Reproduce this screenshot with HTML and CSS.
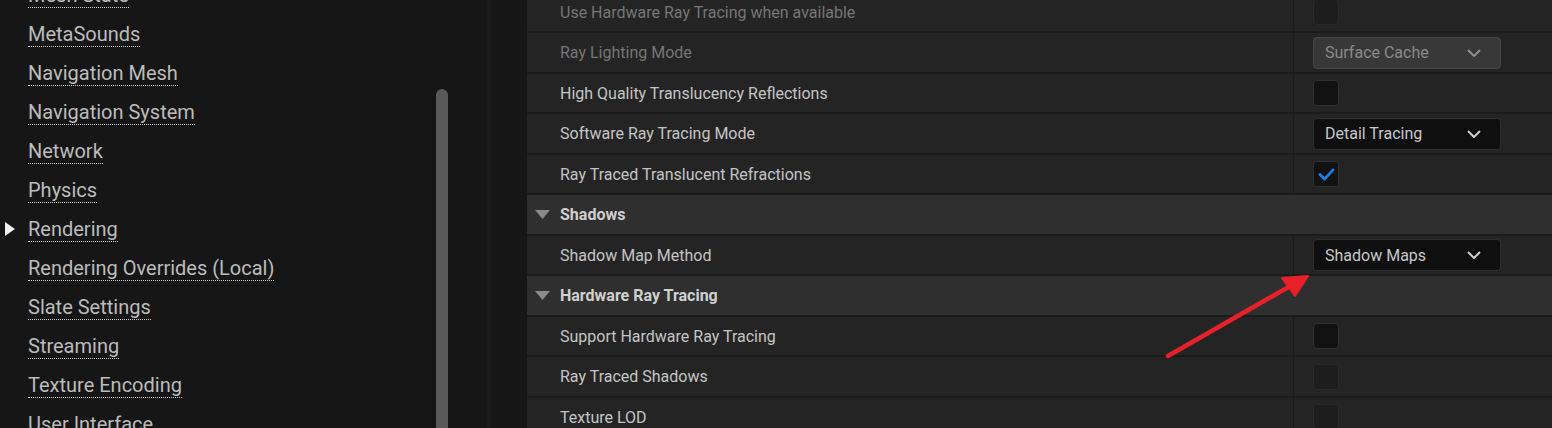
FILE: index.html
```html
<!DOCTYPE html>
<html>
<head>
<meta charset="utf-8">
<link rel="stylesheet" href="styles.css">
</head>
<body>
<div class="app">
  <aside class="sidebar">
    <ul class="nav">
      <li><span class="link">Mesh State</span></li>
      <li><span class="link">MetaSounds</span></li>
      <li><span class="link">Navigation Mesh</span></li>
      <li><span class="link">Navigation System</span></li>
      <li><span class="link">Network</span></li>
      <li><span class="link">Physics</span></li>
      <li class="active"><span class="link">Rendering</span></li>
      <li><span class="link">Rendering Overrides (Local)</span></li>
      <li><span class="link">Slate Settings</span></li>
      <li><span class="link">Streaming</span></li>
      <li><span class="link">Texture Encoding</span></li>
      <li><span class="link">User Interface</span></li>
    </ul>
    <div class="thumb"></div>
  </aside>
  <div class="splitter"></div>
  <div class="gutter"></div>
  <main class="details">
    <div class="row disabled">
      <div class="label">Use Hardware Ray Tracing when available</div>
      <div class="value"><span class="check off"></span></div>
    </div>
    <div class="row disabled">
      <div class="label">Ray Lighting Mode</div>
      <div class="value"><span class="combo off">Surface Cache<svg class="chev" viewBox="0 0 14 8"><path d="M1 1l6 6 6-6"/></svg></span></div>
    </div>
    <div class="row">
      <div class="label">High Quality Translucency Reflections</div>
      <div class="value"><span class="check"></span></div>
    </div>
    <div class="row">
      <div class="label">Software Ray Tracing Mode</div>
      <div class="value"><span class="combo">Detail Tracing<svg class="chev" viewBox="0 0 14 8"><path d="M1 1l6 6 6-6"/></svg></span></div>
    </div>
    <div class="row">
      <div class="label">Ray Traced Translucent Refractions</div>
      <div class="value"><span class="check"><svg class="tick" viewBox="0 0 18 14"><path d="M2 7l5 5 9-10"/></svg></span></div>
    </div>
    <div class="row header">
      <svg class="tri" viewBox="0 0 15 9"><path d="M0 0h15L7.5 9z"/></svg>
      <div class="htext">Shadows</div>
    </div>
    <div class="row">
      <div class="label">Shadow Map Method</div>
      <div class="value"><span class="combo">Shadow Maps<svg class="chev" viewBox="0 0 14 8"><path d="M1 1l6 6 6-6"/></svg></span></div>
    </div>
    <div class="row header">
      <svg class="tri" viewBox="0 0 15 9"><path d="M0 0h15L7.5 9z"/></svg>
      <div class="htext">Hardware Ray Tracing</div>
    </div>
    <div class="row">
      <div class="label">Support Hardware Ray Tracing</div>
      <div class="value"><span class="check"></span></div>
    </div>
    <div class="row">
      <div class="label">Ray Traced Shadows</div>
      <div class="value"><span class="check off"></span></div>
    </div>
    <div class="row">
      <div class="label">Texture LOD</div>
      <div class="value"><span class="check off"></span></div>
    </div>
  </main>
</div>
<svg class="arrow" viewBox="0 0 1552 428" width="1552" height="428">
  <line x1="1168" y1="356" x2="1292" y2="285" stroke="#e8202a" stroke-width="4.5" stroke-linecap="round"/>
  <path d="M1308 276 L1282 278 L1295 296 Z" fill="#e8202a" stroke="#e8202a" stroke-width="2" stroke-linejoin="round"/>
</svg>
</body>
</html>
```

FILE: styles.css
```css
html, body {
  margin: 0;
  padding: 0;
  background: #161616;
  overflow: hidden;
  width: 1552px;
  height: 428px;
  font-family: Roboto, "Liberation Sans", sans-serif;
}

.app {
  display: flex;
  height: 428px;
}

.sidebar {
  position: relative;
  width: 487px;
  flex: none;
  background: #161616;
  overflow: hidden;
}

.nav {
  list-style: none;
  margin: -24px 0 0 0;
  padding: 0 0 0 28px;
}

.nav li {
  position: relative;
  height: 39px;
  display: flex;
  align-items: center;
}

.link {
  font-size: 20px;
  line-height: 22px;
  color: #bcbcbc;
  border-bottom: 1px dotted #d0d0d0;
  padding-bottom: 1px;
}

.active::before {
  content: "";
  position: absolute;
  left: -23px;
  top: 12px;
  border-left: 10px solid #f0f0f0;
  border-top: 7.5px solid transparent;
  border-bottom: 7.5px solid transparent;
}

.thumb {
  position: absolute;
  left: 436px;
  top: 89px;
  width: 12px;
  height: 360px;
  background: #595959;
  border-radius: 6px;
}

.splitter {
  width: 4px;
  flex: none;
  background: #1b1b1b;
}

.gutter {
  width: 36px;
  flex: none;
  background: #161616;
}

.details {
  flex: 1;
  background: #1b1b1b;
  margin-top: -7.2px;
  display: flex;
  flex-direction: column;
  gap: 2px;
}

.row {
  height: 38.5px;
  flex: none;
  display: flex;
  align-items: stretch;
  background: #242424;
}

.label {
  width: 767px;
  flex: none;
  box-sizing: border-box;
  padding-left: 33px;
  display: flex;
  align-items: center;
  font-size: 16px;
  color: #c4c4c4;
  border-right: 1px solid #1b1b1b;
}

.disabled .label {
  color: #767676;
}

.value {
  flex: 1;
  display: flex;
  align-items: center;
  padding-left: 19px;
}

.check {
  width: 26px;
  height: 26px;
  box-sizing: border-box;
  border: 1px solid #303030;
  border-radius: 4px;
  background: #121212;
  display: flex;
  align-items: center;
  justify-content: center;
}

.check.off {
  background: #1d1d1d;
  border-color: #2a2a2a;
}

.tick {
  width: 17px;
  height: 13px;
  fill: none;
  stroke: #1a7fe8;
  stroke-width: 3;
  stroke-linecap: round;
  stroke-linejoin: round;
}

.combo {
  width: 188px;
  height: 32px;
  box-sizing: border-box;
  border: 1px solid #2e2e2e;
  border-radius: 4px;
  background: #0f0f0f;
  color: #c8c8c8;
  font-size: 16px;
  display: flex;
  align-items: center;
  justify-content: space-between;
  padding: 0 19px 0 11px;
}

.combo.off {
  background: #383838;
  border-color: #484848;
  color: #8a8a8a;
}

.chev {
  width: 14px;
  height: 8px;
  fill: none;
  stroke: #cfcfcf;
  stroke-width: 2;
}

.combo.off .chev {
  stroke: #8f8f8f;
}

.header {
  background: #2f2f2f;
  align-items: center;
}

.tri {
  width: 15px;
  height: 9px;
  margin-left: 8px;
  fill: #8a8a8a;
}

.htext {
  margin-left: 10px;
  font-size: 16px;
  font-weight: bold;
  color: #d0d0d0;
}

.arrow {
  position: absolute;
  left: 0;
  top: 0;
  pointer-events: none;
}
```
